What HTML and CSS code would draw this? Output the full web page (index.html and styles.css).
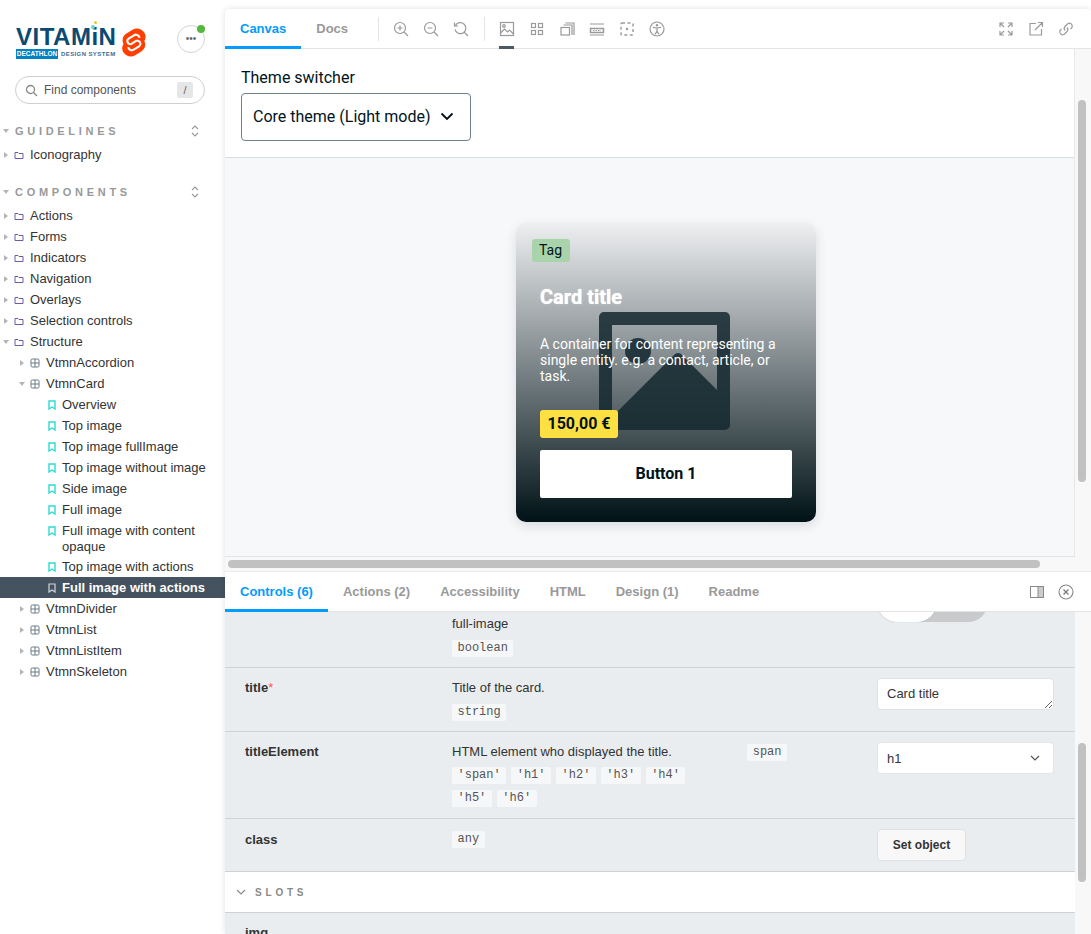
FILE: index.html
```html
<!DOCTYPE html>
<html lang="en">
  <head>
    <meta charset="UTF-8" />
    <meta name="viewport" content="width=device-width, initial-scale=1.0" />
    <title>Full image with actions - VtmnCard</title>
    <link rel="stylesheet" href="styles.css">
  </head>
  <body>
    <svg class="sprites" width="0" height="0">
      <symbol id="i-folder" viewBox="0 0 10 10"><path d="M1 2.500h3l1 1h4v5H1z" fill="none" stroke="#6a5aa8" stroke-width="1"/></symbol>
      <symbol id="i-comp" viewBox="0 0 10 10"><rect x="1" y="1" width="8" height="8" rx="1.200" fill="none" stroke="#6b7a88" stroke-width="1"/><path d="M5 1v8M1 5h8" stroke="#6b7a88" stroke-width="1"/></symbol>
      <symbol id="i-story" viewBox="0 0 10 10"><path d="M2 1h6v8L5 7 2 9z" fill="none" stroke="#2cdcd0" stroke-width="1.400"/></symbol>
      <symbol id="i-story-on" viewBox="0 0 10 10"><path d="M2 1h6v8L5 7 2 9z" fill="none" stroke="#cfd6dc" stroke-width="1.200"/></symbol>
      <symbol id="i-unfold" viewBox="0 0 10 14"><path d="M2 5l3-3 3 3M2 9l3 3 3-3" fill="none" stroke="#999" stroke-width="1.100"/></symbol>
    </svg>

    <aside class="sidebar">
      <div class="brand">
        <div class="logo">
          <div class="logo-word">VITAMiN<span class="dot dot-a"></span><span class="dot dot-b"></span></div>
          <div class="logo-sub"><span class="logo-badge">DECATHLON</span><span class="logo-ds">DESIGN SYSTEM</span></div>
        </div>
        <svg class="svelte" width="26" height="29" viewBox="2 0 41 49">
          <path d="M39.500 7.100C35.100.8 26.400-1.100 20.100 2.900L9.100 9.900C6.100 11.800 4 14.900 3.400 18.400 2.900 21.300 3.300 24.300 4.700 26.900 3.700 28.400 3.100 30 2.800 31.700 2.200 35.300 3 39 5.100 41.900 9.500 48.200 18.200 50.100 24.500 46.100L35.500 39.100C38.500 37.200 40.600 34.100 41.200 30.600 41.700 27.700 41.300 24.700 39.900 22.100 40.900 20.600 41.500 19 41.800 17.300 42.400 13.700 41.600 10 39.500 7.100Z" fill="#ff3e00"/>
          <path d="M32 16.500C30.500 12 26 10 22.500 12.300L13.500 18C9.500 20.500 11 26.500 15.500 27.500L18 27 26.500 21.500 29 21.500C33.500 22.500 35 28.500 31 31L22 36.700C18.500 39 14 37 12.500 32.500" fill="none" stroke="#fff" stroke-width="3.600"/>
        </svg>
        <button class="menu-btn"><span>•••</span></button>
      </div>

      <div class="search">
        <svg width="13" height="13" viewBox="0 0 13 13"><circle cx="5.500" cy="5.500" r="4" fill="none" stroke="#888" stroke-width="1.300"/><path d="M8.500 8.500l3.500 3.500" stroke="#888" stroke-width="1.300"/></svg>
        <span class="search-text">Find components</span>
        <kbd>/</kbd>
      </div>

      <div class="section section-first">
        <span class="caret caret-open"></span><span class="section-name">GUIDELINES</span>
        <svg class="unfold" width="10" height="14"><use href="#i-unfold"/></svg>
      </div>
      <div class="item"><span class="caret"></span><svg class="ico" width="10" height="10"><use href="#i-folder"/></svg>Iconography</div>

      <div class="section">
        <span class="caret caret-open"></span><span class="section-name">COMPONENTS</span>
        <svg class="unfold" width="10" height="14"><use href="#i-unfold"/></svg>
      </div>
      <div class="item"><span class="caret"></span><svg class="ico" width="10" height="10"><use href="#i-folder"/></svg>Actions</div>
      <div class="item"><span class="caret"></span><svg class="ico" width="10" height="10"><use href="#i-folder"/></svg>Forms</div>
      <div class="item"><span class="caret"></span><svg class="ico" width="10" height="10"><use href="#i-folder"/></svg>Indicators</div>
      <div class="item"><span class="caret"></span><svg class="ico" width="10" height="10"><use href="#i-folder"/></svg>Navigation</div>
      <div class="item"><span class="caret"></span><svg class="ico" width="10" height="10"><use href="#i-folder"/></svg>Overlays</div>
      <div class="item"><span class="caret"></span><svg class="ico" width="10" height="10"><use href="#i-folder"/></svg>Selection controls</div>
      <div class="item"><span class="caret caret-open"></span><svg class="ico" width="10" height="10"><use href="#i-folder"/></svg>Structure</div>
      <div class="item depth-1"><span class="caret"></span><svg class="ico" width="10" height="10"><use href="#i-comp"/></svg>VtmnAccordion</div>
      <div class="item depth-1"><span class="caret caret-open"></span><svg class="ico" width="10" height="10"><use href="#i-comp"/></svg>VtmnCard</div>
      <div class="item depth-2"><svg class="ico" width="10" height="10"><use href="#i-story"/></svg>Overview</div>
      <div class="item depth-2"><svg class="ico" width="10" height="10"><use href="#i-story"/></svg>Top image</div>
      <div class="item depth-2"><svg class="ico" width="10" height="10"><use href="#i-story"/></svg>Top image fullImage</div>
      <div class="item depth-2"><svg class="ico" width="10" height="10"><use href="#i-story"/></svg>Top image without image</div>
      <div class="item depth-2"><svg class="ico" width="10" height="10"><use href="#i-story"/></svg>Side image</div>
      <div class="item depth-2"><svg class="ico" width="10" height="10"><use href="#i-story"/></svg>Full image</div>
      <div class="item depth-2 item-tall"><svg class="ico" width="10" height="10"><use href="#i-story"/></svg><span>Full image with content<br>opaque</span></div>
      <div class="item depth-2"><svg class="ico" width="10" height="10"><use href="#i-story"/></svg>Top image with actions</div>
      <div class="item depth-2 item-active"><svg class="ico" width="10" height="10"><use href="#i-story-on"/></svg>Full image with actions</div>
      <div class="item depth-1"><span class="caret"></span><svg class="ico" width="10" height="10"><use href="#i-comp"/></svg>VtmnDivider</div>
      <div class="item depth-1"><span class="caret"></span><svg class="ico" width="10" height="10"><use href="#i-comp"/></svg>VtmnList</div>
      <div class="item depth-1"><span class="caret"></span><svg class="ico" width="10" height="10"><use href="#i-comp"/></svg>VtmnListItem</div>
      <div class="item depth-1"><span class="caret"></span><svg class="ico" width="10" height="10"><use href="#i-comp"/></svg>VtmnSkeleton</div>
    </aside>

    <main class="main">
      <div class="toolbar">
        <a class="tab tab-canvas tab-active">Canvas</a>
        <a class="tab tab-docs">Docs</a>
        <span class="divider divider-a"></span>
        <button class="tool"><svg width="16" height="16" viewBox="0 0 16 16"><circle cx="7" cy="7" r="5.500"/><path d="M11 11l4 4M4.500 7h5M7 4.500v5"/></svg></button>
        <button class="tool"><svg width="16" height="16" viewBox="0 0 16 16"><circle cx="7" cy="7" r="5.500"/><path d="M11 11l4 4M4.500 7h5"/></svg></button>
        <button class="tool"><svg width="16" height="16" viewBox="0 0 16 16"><path d="M2.500 4.500A5.500 5.500 0 1 1 2 8.500M1.500 1.500v3.500h3.500M11.500 11.500l3.500 3.500"/></svg></button>
        <span class="divider divider-b"></span>
        <button class="tool tool-on"><svg width="16" height="16" viewBox="0 0 16 16"><rect x="1.500" y="1.500" width="13" height="13"/><path d="M1.500 12l4-4 3 3 2-2 4 4"/><circle cx="5" cy="5" r="1.300"/></svg></button>
        <button class="tool"><svg width="16" height="16" viewBox="0 0 16 16"><rect x="2.500" y="2.500" width="4" height="4"/><rect x="9.500" y="2.500" width="4" height="4"/><rect x="2.500" y="9.500" width="4" height="4"/><rect x="9.500" y="9.500" width="4" height="4"/></svg></button>
        <button class="tool"><svg width="16" height="16" viewBox="0 0 16 16"><rect x="2" y="6.500" width="8.500" height="7.500"/><path d="M4.500 4H13v10M6.500 2H15v12"/></svg></button>
        <button class="tool"><svg width="16" height="16" viewBox="0 0 16 16"><path d="M1 3h14M1 14h14"/><rect x="1.500" y="7.500" width="13" height="4" stroke-width="1.500"/><path d="M4 9.500h8" stroke-dasharray="1.500 1"/></svg></button>
        <button class="tool"><svg width="16" height="16" viewBox="0 0 16 16"><rect x="2" y="2" width="12" height="12" rx="1" stroke-dasharray="3 2.500" stroke-width="1.400"/><circle cx="8" cy="8" r="0.600"/></svg></button>
        <button class="tool"><svg width="16" height="16" viewBox="0 0 16 16"><circle cx="8" cy="8" r="7"/><circle cx="8" cy="4.300" r="0.700"/><path d="M4 6.300l4 .7 4-.7M8 7v3l-2 3.500M8 10l2 3.500"/></svg></button>
        <span class="toolbar-right">
          <button class="tool"><svg width="16" height="16" viewBox="0 0 16 16"><path d="M2 6V2h4M14 6V2h-4M2 10v4h4M14 10v4h-4M2 2l4 4M14 2l-4 4M2 14l4-4M14 14l-4-4"/></svg></button>
          <button class="tool"><svg width="16" height="16" viewBox="0 0 16 16"><path d="M8 2.500H2v11.500h11.500V8M7 9l7-7M10 1.500h4.500V6"/></svg></button>
          <button class="tool"><svg width="16" height="16" viewBox="0 0 16 16"><path d="M7 9.500a3 3 0 0 1 0-4l3-3a3 3 0 0 1 4 4l-1.500 1.500M9 6.500a3 3 0 0 1 0 4l-3 3a3 3 0 0 1-4-4l1.500-1.500"/></svg></button>
        </span>
      </div>

      <div class="preview">
        <div class="preview-body">
          <div class="theme-bar">
            <label class="theme-label">Theme switcher</label>
            <div class="theme-select">
              <span>Core theme (Light mode)</span>
              <svg width="14" height="9" viewBox="0 0 14 9"><path d="M1.500 1.500L7 7l5.500-5.500" fill="none" stroke="#001018" stroke-width="1.800"/></svg>
            </div>
          </div>
          <div class="canvas">
            <article class="card">
              <svg class="card-placeholder" width="131" height="118" viewBox="0 0 131 118">
                <path fill-rule="evenodd" d="M5 0h121a5 5 0 0 1 5 5v108a5 5 0 0 1-5 5H5a5 5 0 0 1-5-5V5a5 5 0 0 1 5-5zM13 13v92L75 43a5 5 0 0 1 8 0l35 35V13z" fill="#14282f" fill-opacity="0.850"/>
                <circle cx="39" cy="39" r="13" fill="#14282f" fill-opacity="0.850"/>
              </svg>
              <span class="card-tag">Tag</span>
              <div class="card-content">
                <h1 class="card-title">Card title</h1>
                <p class="card-text">A container for content representing a single entity. e.g. a contact, article, or task.</p>
                <span class="card-price">150,00 €</span>
                <button class="card-button">Button 1</button>
              </div>
            </article>
          </div>
        </div>
        <div class="vscroll vscroll-top"><div class="vthumb"></div></div>
      </div>
      <div class="hscroll"><div class="hthumb"></div></div>

      <div class="panel-tabs">
        <a class="tab tab-active">Controls (6)</a>
        <a class="tab">Actions (2)</a>
        <a class="tab">Accessibility</a>
        <a class="tab">HTML</a>
        <a class="tab">Design (1)</a>
        <a class="tab">Readme</a>
        <span class="panel-icons">
          <svg width="16" height="16" viewBox="0 0 16 16"><rect x="1.500" y="2.500" width="13" height="11" fill="none" stroke="#888"/><rect x="9" y="2.500" width="5.500" height="11" fill="#ccc" stroke="#888"/></svg>
          <svg width="16" height="16" viewBox="0 0 16 16"><circle cx="8" cy="8" r="7" fill="none" stroke="#888" stroke-width="1.100"/><path d="M5.500 5.500l5 5M10.500 5.500l-5 5" stroke="#777" stroke-width="1.200"/></svg>
        </span>
      </div>

      <div class="panel">
        <div class="rows">
          <div class="row row-clipped">
            <div class="cell"></div>
            <div class="cell cell-desc">
              <div class="desc">full-image</div>
              <div class="chips"><code>boolean</code></div>
            </div>
            <div class="cell"><div class="toggle"><span class="toggle-knob"></span></div></div>
          </div>
          <div class="row row-title">
            <div class="cell name">title<span class="req">*</span></div>
            <div class="cell cell-desc">
              <div class="desc">Title of the card.</div>
              <div class="chips"><code>string</code></div>
            </div>
            <div class="cell cell-ctl"><textarea class="input" rows="1">Card title</textarea></div>
          </div>
          <div class="row row-element">
            <div class="cell name">titleElement</div>
            <div class="cell cell-desc">
              <div class="desc-line">
                <div class="desc">HTML element who displayed the title.</div>
                <code>span</code>
              </div>
              <div class="chips chips-wrap"><code>'span'</code><code>'h1'</code><code>'h2'</code><code>'h3'</code><code>'h4'</code><code>'h5'</code><code>'h6'</code></div>
            </div>
            <div class="cell cell-ctl">
              <div class="select">h1<svg width="10" height="6" viewBox="0 0 10 6"><path d="M1 1l4 4 4-4" fill="none" stroke="#555" stroke-width="1.200"/></svg></div>
            </div>
          </div>
          <div class="row row-class">
            <div class="cell name">class</div>
            <div class="cell cell-desc"><div class="chips chips-top"><code>any</code></div></div>
            <div class="cell cell-ctl"><button class="set-btn">Set object</button></div>
          </div>
          <div class="slots">
            <svg width="10" height="6" viewBox="0 0 10 6"><path d="M1 1l4 4 4-4" fill="none" stroke="#888" stroke-width="1.100"/></svg>
            <span>SLOTS</span>
          </div>
          <div class="row row-img">
            <div class="cell name">img</div>
          </div>
        </div>
        <div class="vscroll vscroll-bottom"><div class="vthumb"></div></div>
      </div>
    </main>
  </body>
</html>
```

FILE: styles.css
```css
* {
  margin: 0;
  padding: 0;
  box-sizing: border-box;
}

body {
  display: flex;
  width: 1091px;
  height: 934px;
  overflow: hidden;
  background: #fff;
  color: #333;
  font-family: "Liberation Sans", Arial, sans-serif;
  font-size: 13px;
}

button {
  font-family: inherit;
  border: none;
  background: none;
}

.sprites {
  position: absolute;
}

/* sidebar */

.sidebar {
  width: 225px;
  flex-shrink: 0;
  padding-top: 20px;
}

.brand {
  display: flex;
  align-items: flex-start;
  height: 56px;
  padding-left: 16px;
}

.logo {
  width: 105px;
}

.logo-word {
  position: relative;
  font-size: 24px;
  line-height: 24px;
  margin-top: 5px;
  font-weight: bold;
  letter-spacing: 0.500px;
  color: #0c4a72;
}

.dot {
  position: absolute;
  border-radius: 50%;
}

.dot-a {
  left: 78px;
  top: -4px;
  width: 3px;
  height: 3px;
  background: #f2c230;
}

.dot-b {
  left: 75px;
  top: 0;
  width: 4px;
  height: 4px;
  background: #6fd0c8;
}

.logo-sub {
  display: flex;
  align-items: center;
  gap: 3px;
  white-space: nowrap;
}

.logo-badge {
  background: #0082c3;
  color: #fff;
  font-size: 6.500px;
  font-weight: bold;
  line-height: 10px;
  width: 42px;
  text-align: center;
  overflow: hidden;
}

.logo-ds {
  font-size: 6px;
  font-weight: bold;
  color: #3a6d92;
  letter-spacing: 0.400px;
}

.svelte {
  margin-top: 8px;
  flex-shrink: 0;
}

.menu-btn {
  position: relative;
  width: 28px;
  height: 28px;
  margin: 5px 0 0 30px;
  border: 1px solid #d5d5d5;
  border-radius: 50%;
  color: #666;
  font-size: 10px;
  line-height: 26px;
}

.menu-btn::after {
  content: "";
  position: absolute;
  top: -1px;
  right: -1px;
  width: 8px;
  height: 8px;
  border-radius: 50%;
  background: #55b83e;
}

.search {
  display: flex;
  align-items: center;
  height: 28px;
  margin: 0 20px 0 15px;
  padding: 0 11px 0 9px;
  border: 1px solid #cfcfcf;
  border-radius: 14px;
  color: #555;
  font-size: 12px;
}

.search-text {
  flex: 1;
  margin-left: 6px;
}

.search kbd {
  width: 16px;
  height: 16px;
  background: #e6e6e6;
  border-radius: 2px;
  text-align: center;
  line-height: 16px;
  font-family: inherit;
  font-size: 11px;
  color: #666;
}

.section {
  display: flex;
  align-items: center;
  height: 16px;
  margin-top: 21px;
  padding-left: 3px;
}

.section-first {
  margin-top: 19px;
}

.section-name {
  margin-left: 1px;
  font-size: 11px;
  font-weight: bold;
  letter-spacing: 3.700px;
  color: #999;
}

.unfold {
  margin-left: auto;
  margin-right: 25px;
}

.item {
  display: flex;
  align-items: center;
  height: 21px;
  padding-left: 3px;
  color: #333;
  line-height: 16px;
}

.section + .item {
  margin-top: 5px;
}

.section + .item + .section {
  margin-top: 19px;
}

.caret {
  width: 0;
  height: 0;
  margin-right: 6px;
  margin-left: 1px;
  border-left: 4px solid #b5b5b5;
  border-top: 3px solid transparent;
  border-bottom: 3px solid transparent;
}

.caret-open {
  margin-left: 0;
  margin-right: 5px;
  border-left: 3px solid transparent;
  border-right: 3px solid transparent;
  border-top: 4px solid #b5b5b5;
  border-bottom: none;
}

.ico {
  margin-right: 6px;
  flex-shrink: 0;
}

.depth-1 {
  padding-left: 19px;
}

.depth-2 {
  padding-left: 47px;
}

.depth-2 .ico {
  margin-right: 5px;
}

.item-tall {
  height: 36px;
  padding-top: 1px;
}

.item-tall .ico {
  align-self: flex-start;
  margin-top: 5px;
}

.item-active {
  background: #44535f;
  color: #fff;
  font-weight: bold;
}

/* main column */

.main {
  flex: 1;
  min-width: 0;
  margin-top: 9px;
  display: flex;
  flex-direction: column;
  background: #fff;
  border-radius: 4px 4px 0 0;
  box-shadow: 0 0 6px rgba(0, 0, 0, 0.12);
}

.toolbar {
  display: flex;
  align-items: center;
  height: 40px;
  flex-shrink: 0;
  border-bottom: 1px solid #e2e4e6;
}

.tab {
  display: flex;
  align-items: center;
  align-self: stretch;
  padding: 2px 15px 0;
  margin-bottom: -1px;
  border-bottom: 3px solid transparent;
  font-size: 13px;
  font-weight: bold;
  color: #999;
  white-space: nowrap;
}

.tab-active {
  color: #029cfd;
  border-bottom-color: #029cfd;
}

.divider {
  width: 1px;
  height: 24px;
  background: #e4e4e4;
}

.divider-a {
  margin: 0 7px 0 15px;
}

.divider-b {
  margin: 0 7px 0 8px;
}

.tool {
  display: flex;
  align-items: center;
  justify-content: center;
  width: 30px;
  align-self: stretch;
  margin-bottom: -1px;
  padding-top: 2px;
  border-bottom: 3px solid transparent;
}

.tool svg {
  fill: none;
  stroke: #9a9a9a;
  stroke-width: 1.200;
}

.tool-on {
  position: relative;
}

.tool-on::after {
  content: "";
  position: absolute;
  left: 7px;
  bottom: -3px;
  width: 15px;
  height: 3px;
  background: #4c5a66;
}

.toolbar-right {
  display: flex;
  align-self: stretch;
  margin-left: auto;
  margin-right: 10px;
}

.preview {
  display: flex;
  height: 508px;
  flex-shrink: 0;
}

.preview-body {
  flex: 1;
  min-width: 0;
  display: flex;
  flex-direction: column;
  border-right: 1px solid #e6e8ea;
  border-bottom: 1px solid #e2e4e6;
}

.theme-bar {
  height: 109px;
  flex-shrink: 0;
  padding: 19px 16px 0;
  border-bottom: 1px solid #dcdfe2;
  font-family: Roboto, sans-serif;
  color: #00141c;
}

.theme-label {
  display: block;
  font-size: 16px;
  line-height: 19px;
  margin-bottom: 6px;
}

.theme-select {
  display: flex;
  align-items: center;
  justify-content: space-between;
  width: 230px;
  height: 48px;
  padding: 0 16px 2px 11px;
  border: 1px solid #6f8290;
  border-radius: 4px;
  font-size: 16px;
}

.canvas {
  flex: 1;
  display: flex;
  justify-content: center;
  padding-top: 65px;
  background: #f6f8fa;
}

.card {
  position: relative;
  width: 300px;
  height: 299px;
  margin-left: 33px;
  padding: 16px 24px 0 16px;
  border-radius: 10px;
  background: linear-gradient(180deg, #eeeff1 0%, #001217 100%);
  box-shadow: 0 4px 12px rgba(0, 20, 30, 0.12);
  font-family: Roboto, sans-serif;
}

.card-placeholder {
  position: absolute;
  left: 83px;
  top: 89px;
}

.card-tag {
  position: relative;
  display: inline-block;
  height: 23px;
  padding: 0 8px 0 7px;
  background: #a9d4ab;
  border-radius: 3px;
  color: #00141c;
  font-size: 14px;
  line-height: 23px;
}

.card-content {
  position: relative;
  padding-left: 8px;
}

.card-title {
  margin-top: 23px;
  font-size: 20px;
  line-height: 24px;
  font-weight: 700;
  color: #fff;
  text-shadow: 0 0 1px #fff;
}

.card-text {
  margin-top: 27px;
  font-size: 14px;
  line-height: 16px;
  color: #fff;
}

.card-price {
  display: inline-block;
  height: 28px;
  margin-top: 26px;
  padding: 0 7.500px;
  background: #ffe042;
  border-radius: 3px;
  color: #00141c;
  font-size: 16px;
  font-weight: 700;
  line-height: 28px;
}

.card-button {
  display: block;
  width: 252px;
  height: 48px;
  margin-top: 12px;
  padding-bottom: 2px;
  background: #fff;
  border-radius: 2px;
  color: #00141c;
  font-family: Roboto, sans-serif;
  font-size: 16px;
  font-weight: 700;
}

.vscroll {
  width: 16px;
  flex-shrink: 0;
  background: #f8f8f8;
  padding: 0 5px 0 3px;
}

.vthumb {
  width: 8px;
  background: #c1c1c1;
  border-radius: 4px;
}

.vscroll-top .vthumb {
  height: 382px;
  margin-top: 51px;
}

.vscroll-bottom .vthumb {
  height: 139px;
  margin-top: 131px;
}

.hscroll {
  height: 15px;
  flex-shrink: 0;
  padding: 3px 51px 0 3px;
  background: #f8f8f8;
  border-bottom: 1px solid #ececec;
}

.hthumb {
  height: 8px;
  background: #c1c1c1;
  border-radius: 4px;
}

/* addon panel */

.panel-tabs {
  display: flex;
  height: 40px;
  flex-shrink: 0;
  border-bottom: 1px solid #e2e4e6;
}

.panel-icons {
  display: flex;
  align-items: center;
  gap: 13px;
  margin-left: auto;
  margin-right: 17px;
}

.panel {
  flex: 1;
  min-height: 0;
  display: flex;
}

.rows {
  flex: 1;
  min-width: 0;
  overflow: hidden;
}

.row {
  display: grid;
  grid-template-columns: 207px 425px 217px;
  overflow: hidden;
  background: #eaedf0;
  border-bottom: 1px solid #ced2d6;
}

.cell {
  padding: 0 20px;
  min-width: 0;
}

.name {
  padding-top: 12px;
  font-weight: bold;
  line-height: 16px;
}

.req {
  color: #f55;
  font-weight: normal;
}

.cell-desc {
  padding-top: 12px;
  line-height: 16px;
}

.desc-line {
  display: flex;
  justify-content: space-between;
  padding-right: 50px;
  align-items: flex-start;
}

.chips {
  display: flex;
  flex-wrap: wrap;
  gap: 6px 5px;
  margin-top: 8px;
}

.chips-wrap {
  margin-top: 6px;
  width: 240px;
}

.chips-top {
  margin-top: 0;
}

code {
  display: inline-block;
  height: 17px;
  padding: 0 5.500px;
  background: #f6f7f8;
  border-radius: 2px;
  font-family: "Liberation Mono", monospace;
  font-size: 12px;
  line-height: 17px;
  color: #555;
}

.row-clipped {
  height: 56px;
}

.row-clipped .cell-desc {
  padding-top: 4px;
}

.toggle {
  width: 111px;
  height: 20px;
  margin-top: -10px;
  background: #c8cacc;
  border-radius: 0 0 20px 20px;
}

.toggle-knob {
  display: block;
  width: 60px;
  height: 20px;
  background: #fff;
  border-radius: 0 0 20px 20px;
  box-shadow: 0 0 1px rgba(0, 0, 0, 0.3);
}

.row-title {
  height: 64px;
}

.row-element {
  height: 87px;
}

.row-class {
  height: 53px;
}

.row-class .name {
  padding-top: 13px;
}

.cell-ctl {
  padding-top: 10px;
}

.input {
  display: block;
  width: 177px;
  height: 32px;
  padding: 7px 9px;
  border: 1px solid #dfe2e5;
  border-radius: 4px;
  background: #fff;
  font-family: inherit;
  font-size: 13px;
  line-height: 16px;
  color: #333;
  resize: vertical;
  overflow: hidden;
  outline: none;
}

.select {
  display: flex;
  align-items: center;
  justify-content: space-between;
  width: 177px;
  height: 32px;
  padding: 0 13px 0 9px;
  background: #fff;
  border: 1px solid #e4e6e8;
  border-radius: 4px;
  font-size: 13px;
}

.set-btn {
  width: 89px;
  height: 32px;
  background: #f8f8f8;
  border: 1px solid #dfe1e3;
  border-radius: 4px;
  font-size: 12px;
  font-weight: bold;
  color: #333;
}

.slots {
  display: flex;
  align-items: center;
  gap: 9px;
  height: 41px;
  padding-left: 11px;
  background: #fff;
  border-bottom: 1px solid #ced2d6;
  font-size: 10px;
  font-weight: bold;
  letter-spacing: 3.800px;
  color: #8a8a8a;
}

.row-img {
  height: 40px;
  border-bottom: none;
}
```
